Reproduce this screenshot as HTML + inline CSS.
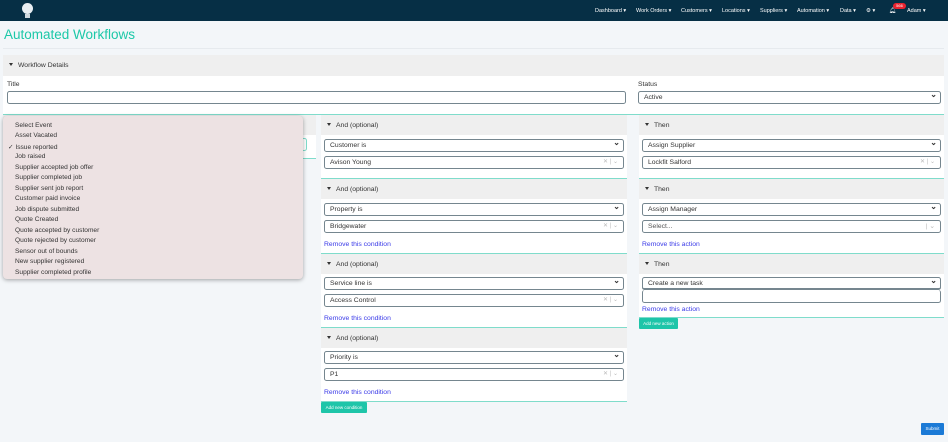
<!DOCTYPE html>
<html><head><meta charset="utf-8"><style>
*{box-sizing:border-box;margin:0;padding:0}
body{width:948px;height:442px;overflow:hidden;background:#f3f6f9;font-family:"Liberation Sans",Arial,sans-serif;color:#333;position:relative;font-size:7px}
.a{position:absolute}
.nav{left:0;top:0;width:948px;height:21px;background:#062f45}
.nav span{position:absolute;top:7.5px;color:#fff;font-size:5.5px;white-space:nowrap}
.hd{background:#efefef;font-size:6.8px;color:#333;padding-left:6px;line-height:21px}
.hd:before{content:"";display:inline-block;border-left:2.5px solid transparent;border-right:2.5px solid transparent;border-top:3px solid #333;margin-right:5px;vertical-align:1px}
.wh{background:#fff;border-bottom:1.5px solid #7fdccb}
.sel{position:absolute;height:13px;border:1.4px solid #75868f;border-radius:2.5px;background:#fff;font-size:6.8px;line-height:11.5px;padding-left:5px;color:#333}
.sel.c:after{content:"⌄";position:absolute;right:3px;top:-3px;font-size:8px;font-weight:bold}
.rs:after{content:"✕ | ⌄";position:absolute;right:5px;top:0;color:#bbb;font-size:6px}
.lnk{position:absolute;color:#3a3ae8;font-size:6.8px}
.btn{position:absolute;background:#1ec5a9;color:#fff;font-size:4.5px;text-align:center;line-height:11px;border-radius:1px}
.dd{left:3px;top:116px;width:300px;height:163px;background:#ede2e3;border-radius:4px;box-shadow:0 1px 4px rgba(0,0,0,.35)}
.dd div{position:absolute;left:12px;font-size:6.6px;color:#333}
</style></head><body>
<div class="a nav">
<div class="a" style="left:22px;top:3px;width:11px;height:11px;border-radius:50%;background:#e8eef2"></div>
<div class="a" style="left:25px;top:14px;width:5px;height:4px;background:#cfd8de"></div>
<span style="left:595px">Dashboard ▾</span><span style="left:636px">Work Orders ▾</span><span style="left:681px">Customers ▾</span><span style="left:722px">Locations ▾</span><span style="left:760px">Suppliers ▾</span><span style="left:797px">Automation ▾</span><span style="left:840px">Data ▾</span><span style="left:866px">⚙ ▾</span><span style="left:889px">🔔︎</span>
<div class="a" style="left:893px;top:3px;width:13px;height:6px;border-radius:3px;background:#e8232f;color:#fff;font-size:4px;text-align:center;line-height:6px">566</div>
<span style="left:907px">Adam ▾</span>
</div>
<div class="a" style="left:4px;top:27px;font-size:13.5px;color:#1cc8a8">Automated Workflows</div>
<div class="a" style="left:3px;top:48px;width:941px;height:1px;background:#e6eaee"></div>
<div class="a hd" style="left:3px;top:55px;width:941px;height:21px">Workflow Details</div>
<div class="a wh" style="left:3px;top:76px;width:941px;height:39px"></div>
<div class="a" style="left:7px;top:81px;font-size:6.8px">Title</div>
<div class="sel" style="left:7px;top:91px;width:619px"></div>
<div class="a" style="left:638px;top:81px;font-size:6.8px">Status</div>
<div class="sel c" style="left:638px;top:91px;width:303px">Active</div>
<!-- left column -->
<div class="a hd" style="left:3px;top:115px;width:313px;height:20px"></div>
<div class="a wh" style="left:3px;top:135px;width:313px;height:24px"></div>
<div class="sel c" style="left:8px;top:138px;width:299px;border-color:#7fdccb"></div>
<!-- middle -->
<div class="a hd" style="left:321px;top:115px;width:306px;height:20px">And (optional)</div>
<div class="a wh" style="left:321px;top:135px;width:306px;height:44px"></div>
<div class="sel c" style="left:324px;top:139px;width:300px">Customer is</div>
<div class="sel rs" style="left:324px;top:156px;width:300px">Avison Young</div>
<div class="a hd" style="left:321px;top:179px;width:306px;height:20px">And (optional)</div>
<div class="a wh" style="left:321px;top:199px;width:306px;height:55px"></div>
<div class="sel c" style="left:324px;top:203px;width:300px">Property is</div>
<div class="sel rs" style="left:324px;top:220px;width:300px">Bridgewater</div>
<div class="lnk" style="left:324px;top:241px">Remove this condition</div>
<div class="a hd" style="left:321px;top:254px;width:306px;height:20px">And (optional)</div>
<div class="a wh" style="left:321px;top:274px;width:306px;height:54px"></div>
<div class="sel c" style="left:324px;top:277px;width:300px">Service line is</div>
<div class="sel rs" style="left:324px;top:294px;width:300px">Access Control</div>
<div class="lnk" style="left:324px;top:315px">Remove this condition</div>
<div class="a hd" style="left:321px;top:328px;width:306px;height:20px">And (optional)</div>
<div class="a wh" style="left:321px;top:348px;width:306px;height:54px"></div>
<div class="sel c" style="left:324px;top:351px;width:300px">Priority is</div>
<div class="sel rs" style="left:324px;top:368px;width:300px">P1</div>
<div class="lnk" style="left:324px;top:389px">Remove this condition</div>
<div class="btn" style="left:321px;top:402px;width:46px;height:11px">Add new condition</div>
<!-- right -->
<div class="a hd" style="left:639px;top:115px;width:305px;height:20px">Then</div>
<div class="a wh" style="left:639px;top:135px;width:305px;height:44px"></div>
<div class="sel c" style="left:642px;top:139px;width:299px">Assign Supplier</div>
<div class="sel rs" style="left:642px;top:156px;width:299px">Lockfit Salford</div>
<div class="a hd" style="left:639px;top:179px;width:305px;height:20px">Then</div>
<div class="a wh" style="left:639px;top:199px;width:305px;height:55px"></div>
<div class="sel c" style="left:642px;top:203px;width:299px">Assign Manager</div>
<div class="sel" style="left:642px;top:220px;width:299px;color:#555">Select...<span style="position:absolute;right:5px;color:#bbb">| ⌄</span></div>
<div class="lnk" style="left:642px;top:241px">Remove this action</div>
<div class="a hd" style="left:639px;top:254px;width:305px;height:20px">Then</div>
<div class="a wh" style="left:639px;top:274px;width:305px;height:44px"></div>
<div class="sel c" style="left:642px;top:277px;width:299px;border-bottom-width:2px">Create a new task</div>
<div class="sel" style="left:642px;top:290px;width:299px;border-top:none"></div>
<div class="lnk" style="left:642px;top:306px">Remove this action</div>
<div class="btn" style="left:639px;top:318px;width:39px;height:11px">Add new action</div>
<div class="btn" style="left:921px;top:423px;width:23px;height:12px;background:#1b7ad6;line-height:12px">Submit</div>
<!-- dropdown -->
<div class="a dd">
<div style="top:6px">Select Event</div>
<div style="top:16px">Asset Vacated</div>
<div style="top:26.5px;left:5px">✓ Issue reported</div>
<div style="top:37px">Job raised</div>
<div style="top:47.5px">Supplier accepted job offer</div>
<div style="top:58px">Supplier completed job</div>
<div style="top:68.5px">Supplier sent job report</div>
<div style="top:79px">Customer paid invoice</div>
<div style="top:89.5px">Job dispute submitted</div>
<div style="top:100px">Quote Created</div>
<div style="top:110.5px">Quote accepted by customer</div>
<div style="top:121px">Quote rejected by customer</div>
<div style="top:131.5px">Sensor out of bounds</div>
<div style="top:142px">New supplier registered</div>
<div style="top:152.5px">Supplier completed profile</div>
</div>
</body></html>
